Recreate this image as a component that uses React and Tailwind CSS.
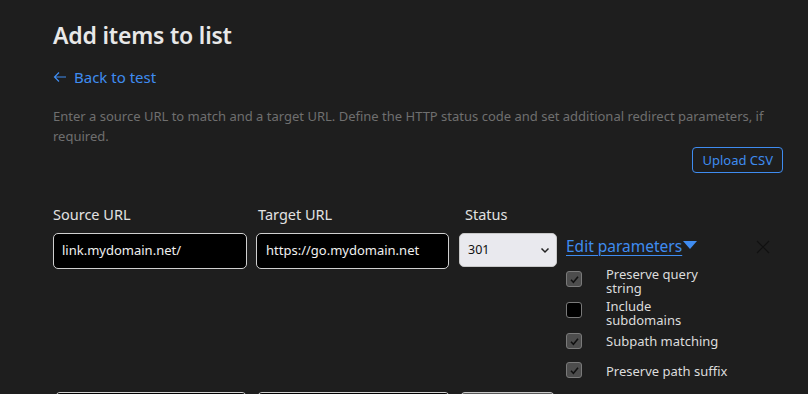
import React from "react";

function Check({ checked }) {
  return checked ? (
    <div className="w-[16px] h-[16px] rounded-[3px] bg-[#4d4d4d] border border-[#7a7a7a] flex items-center justify-center shrink-0">
      <svg width="11" height="11" viewBox="0 0 11 11">
        <path d="M2 5.8 L4.4 8.2 L9 2.8" fill="none" stroke="#111" strokeWidth="1.6" />
      </svg>
    </div>
  ) : (
    <div className="w-[16px] h-[16px] rounded-[3px] bg-black border border-[#7a7a7a] shrink-0" />
  );
}

function Param({ checked, first, second, rowMt, cbMt, textMt }) {
  return (
    <div className={`flex items-start ${rowMt}`}>
      <div className={`w-[40px] ${cbMt}`}>
        <Check checked={checked} />
      </div>
      <div className={`text-[13px] leading-[14px] text-[#dcdcdc] whitespace-nowrap ${textMt}`}>
        {first}
        {second ? <br /> : null}
        {second}
      </div>
    </div>
  );
}

export default function App() {
  return (
    <div
      className="w-[808px] h-[394px] overflow-hidden bg-[#1e1e1e] pl-[53px] pr-[25px] pt-[19px]"
      style={{ fontFamily: '"Noto Sans", "Open Sans", sans-serif' }}
    >
      <h1 className="text-[23px] leading-[32px] font-semibold text-[#e8e8e8] tracking-[-0.2px]">Add items to list</h1>
      <div className="mt-[15px] flex items-center text-[15px] leading-[22px] text-[#3f8cf0]">
        <svg width="14" height="12" viewBox="0 0 14 12" className="mr-[7px]">
          <path d="M13 6 H1.5 M6 1.5 L1.5 6 L6 10.5" fill="none" stroke="#3f8cf0" strokeWidth="1.2" />
        </svg>
        <span>Back to test</span>
      </div>
      <p className="mt-[18px] text-[13px] leading-[20px] text-[#6f6f6f] w-[730px]">
        Enter a source URL to match and a target URL. Define the HTTP status code and set additional redirect parameters, if required.
      </p>
      <div className="flex justify-end mt-[1px]">
        <button className="h-[26px] px-[9px] rounded-[4px] border border-[#3f8cf0] text-[#3f8cf0] text-[13px] leading-[20px]">
          Upload CSV
        </button>
      </div>
      <div className="flex mt-[30px]">
        <div className="w-[194px]">
          <div className="text-[14.5px] leading-[22px] text-[#e2e2e2]">Source URL</div>
          <div className="mt-[8px] h-[36px] rounded-[5px] border border-[#d0d0d0] bg-black flex items-center pl-[8px] text-[13px] text-[#f0f0f0]">
            link.mydomain.net/
          </div>
        </div>
        <div className="w-[193px] ml-[9px]">
          <div className="pl-[2px] text-[14.5px] leading-[22px] text-[#e2e2e2]">Target URL</div>
          <div className="mt-[8px] h-[36px] rounded-[5px] border border-[#d0d0d0] bg-black flex items-center pl-[9px] text-[13px] text-[#f0f0f0]">
            https://go.mydomain.net
          </div>
        </div>
        <div className="w-[98px] ml-[10px]">
          <div className="pl-[6px] text-[14.5px] leading-[22px] text-[#e2e2e2]">Status</div>
          <div className="mt-[8px] h-[34px] rounded-[5px] border border-[#c8c8c8] bg-[#e9e9ee] flex items-center justify-between pl-[8px] pr-[6px] text-[12.5px] text-[#111]">
            <span>301</span>
            <svg width="10" height="8" viewBox="0 0 10 8">
              <path d="M1.5 2.5 L5 6 L8.5 2.5" fill="none" stroke="#222" strokeWidth="1.5" />
            </svg>
          </div>
        </div>
        <div className="ml-[9px] pt-[32px]">
          <div className="flex items-center h-[22px]">
            <span className="text-[15.5px] leading-[22px] text-[#3f8cf0] underline underline-offset-[3px] decoration-1">Edit parameters</span>
            <svg width="14" height="9" viewBox="0 0 14 9" className="ml-[1px] mt-[-2px]">
              <path d="M0 0 H14 L7 8 Z" fill="#3f8cf0" />
            </svg>
          </div>
          <Param checked first="Preserve query" second="string" rowMt="mt-[10px]" cbMt="mt-[4px]" textMt="" />
          <Param checked={false} first="Include" second="subdomains" rowMt="mt-[4px]" cbMt="mt-[3px]" textMt="" />
          <Param checked first="Subpath matching" rowMt="mt-[6px]" cbMt="" textMt="mt-[1px]" />
          <Param checked first="Preserve path suffix" rowMt="mt-[13px]" cbMt="" textMt="mt-[2px]" />
        </div>
        <div className="ml-[29px] pt-[37px]">
          <svg width="14" height="14" viewBox="0 0 14 14">
            <path d="M1 1 L13 13 M13 1 L1 13" fill="none" stroke="#111" strokeWidth="1.2" />
          </svg>
        </div>
      </div>
      <div className="flex mt-[14px]">
        <div className="w-[192px] ml-[2px] h-[36px] rounded-t-[5px] border border-[#d0d0d0] bg-black" />
        <div className="w-[193px] ml-[10px] h-[36px] rounded-t-[5px] border border-[#d0d0d0] bg-black" />
        <div className="w-[95px] ml-[10px] h-[36px] rounded-t-[5px] border border-[#c8c8c8] bg-[#5a5a5a]" />
      </div>
    </div>
  );
}
